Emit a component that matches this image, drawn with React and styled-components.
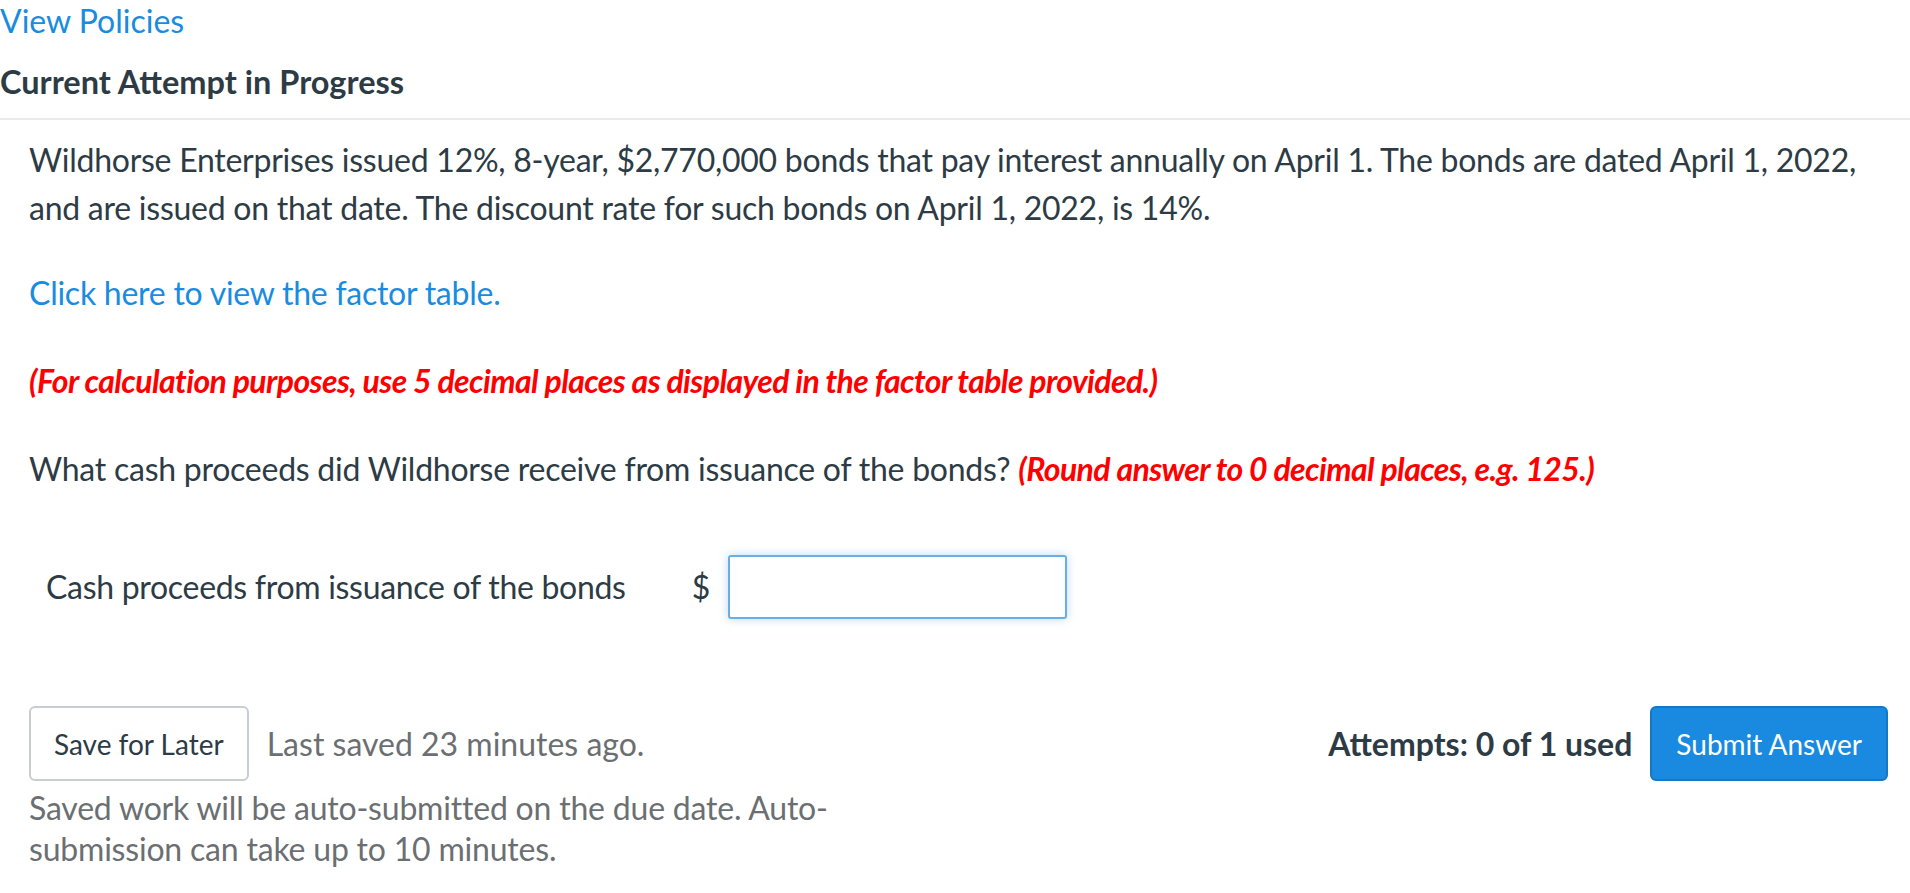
import React from "react";
import styled, { createGlobalStyle } from "styled-components";

const Global = createGlobalStyle`
  html, body { margin: 0; padding: 0; background: #ffffff; }
  body { font-family: Lato, "Noto Sans", "Liberation Sans", sans-serif; color: #2d3b45; }
  * { box-sizing: border-box; }
`;

const Page = styled.div`
  width: 1910px;
  min-height: 893px;
  background: #fff;
`;

const Header = styled.header`
  display: flex;
  flex-direction: column;
  padding-bottom: 15px;
  border-bottom: 2px solid #e8eaec;
`;

const TopLink = styled.a`
  font-size: 32px;
  line-height: 42px;
  color: #1a8ce0;
  text-decoration: none;
  align-self: flex-start;
`;

const Heading = styled.h2`
  margin: 19px 0 0;
  font-size: 32.5px;
  line-height: 42px;
  font-weight: 700;
  color: #2d3b45;
`;

const Content = styled.main`
  padding: 16px 22px 0 29px;
`;

const Para = styled.p`
  margin: 0 0 ${(p) => (p.$gap ? p.$gap : 40)}px;
  font-size: 32px;
  line-height: 48px;
  letter-spacing: -0.25px;
  color: #2d3b45;
`;

const FactorLink = styled.a`
  color: #1a8ce0;
  text-decoration: none;
`;

const Emph = styled.em`
  color: #ff0000;
  font-weight: 700;
  font-style: italic;
  letter-spacing: -0.6px;
`;

const AnswerRow = styled.div`
  display: flex;
  align-items: center;
  margin-top: 62px;
  padding-left: 17px;
`;

const AnswerLabel = styled.span`
  font-size: 32px;
  line-height: 48px;
  color: #2d3b45;
  letter-spacing: -0.3px;
`;

const Dollar = styled.span`
  font-size: 32px;
  line-height: 48px;
  margin-left: 66px;
  margin-right: 18px;
  color: #2d3b45;
`;

const AmountInput = styled.input`
  width: 339px;
  height: 64px;
  border: 2px solid #66afe9;
  border-radius: 3px;
  box-shadow: 0 0 10px rgba(102, 175, 233, 0.45);
  outline: none;
  font-family: inherit;
  font-size: 32px;
  padding: 0 12px;
  background: #fff;
`;

const Footer = styled.div`
  display: flex;
  justify-content: space-between;
  align-items: flex-start;
  margin-top: 87px;
`;

const FooterLeft = styled.div`
  display: flex;
  flex-direction: column;
  width: 830px;
`;

const SaveRow = styled.div`
  display: flex;
  align-items: center;
  gap: 18px;
`;

const Button = styled.button`
  height: 75px;
  padding: 0 ${(p) => (p.$primary ? "24px" : "23px")};
  border-radius: 6px;
  font-family: inherit;
  font-size: 28px;
  cursor: pointer;
  border: 2px solid ${(p) => (p.$primary ? "#1478c4" : "#c7cdd1")};
  background: ${(p) => (p.$primary ? "#198ae0" : "#ffffff")};
  color: ${(p) => (p.$primary ? "#ffffff" : "#2d3b45")};
`;

const Muted = styled.span`
  font-size: 32px;
  line-height: 42px;
  color: #6b6f72;
`;

const Note = styled.p`
  margin: 6px 0 0;
  font-size: 32px;
  line-height: 41px;
  letter-spacing: -0.2px;
  color: #6b6f72;
`;

const FooterRight = styled.div`
  display: flex;
  align-items: center;
  gap: 18px;
`;

const Attempts = styled.span`
  font-size: 32px;
  font-weight: 700;
  color: #2d3b45;
`;

export default function App() {
  return (
    <Page>
      <Global />
      <Header>
        <TopLink href="#">View Policies</TopLink>
        <Heading>Current Attempt in Progress</Heading>
      </Header>
      <Content>
        <Para $gap={37}>
          Wildhorse Enterprises issued 12%, 8-year, $2,770,000 bonds that pay interest annually on April 1. The bonds are dated April 1, 2022,
          and are issued on that date. The discount rate for such bonds on April 1, 2022, is 14%.
        </Para>
        <Para>
          <FactorLink href="#">Click here to view the factor table.</FactorLink>
        </Para>
        <Para>
          <Emph>(For calculation purposes, use 5 decimal places as displayed in the factor table provided.)</Emph>
        </Para>
        <Para>
          What cash proceeds did Wildhorse receive from issuance of the bonds?{" "}
          <Emph>(Round answer to 0 decimal places, e.g. 125.)</Emph>
        </Para>
        <AnswerRow>
          <AnswerLabel>Cash proceeds from issuance of the bonds</AnswerLabel>
          <Dollar>$</Dollar>
          <AmountInput type="text" />
        </AnswerRow>
        <Footer>
          <FooterLeft>
            <SaveRow>
              <Button>Save for Later</Button>
              <Muted>Last saved 23 minutes ago.</Muted>
            </SaveRow>
            <Note>Saved work will be auto-submitted on the due date. Auto-submission can take up to 10 minutes.</Note>
          </FooterLeft>
          <FooterRight>
            <Attempts>Attempts: 0 of 1 used</Attempts>
            <Button $primary>Submit Answer</Button>
          </FooterRight>
        </Footer>
      </Content>
    </Page>
  );
}
